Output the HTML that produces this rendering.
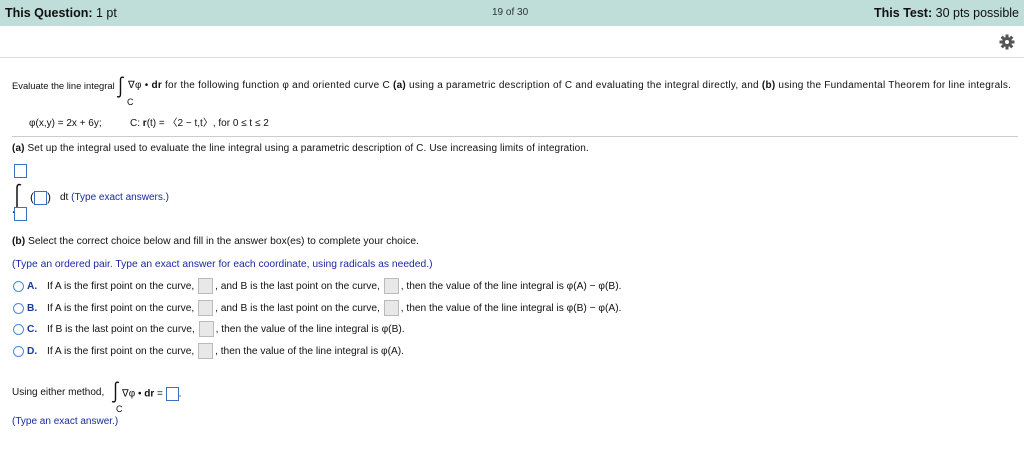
<!DOCTYPE html>
<html><head><meta charset="utf-8"><style>
*{margin:0;padding:0;box-sizing:border-box}
body{width:1024px;height:451px;background:#fff;font-family:"Liberation Sans",Arial,sans-serif;font-size:10px;color:#111;position:relative;overflow:hidden}
.a{position:absolute;white-space:nowrap;line-height:12px}
.hdr{position:absolute;left:0;top:0;width:1024px;height:26px;background:#bfddd9}
.blue{color:#1a2aa0}
.box{display:inline-block;width:13px;height:14px;border:1px solid #3b6fc4;background:#fff;vertical-align:middle}
.gbox{display:inline-block;width:15px;height:16px;border:1px solid #bbb;background:#e8e8e8;vertical-align:middle;margin:0 2px 0 1px}
.rad{position:absolute;left:0;top:3px;width:11px;height:11px;border:1px solid #4a8ad8;border-radius:50%}
.lbl{position:absolute;left:14px;top:0;color:#1a3a9a;font-weight:bold}
.ch{position:absolute;left:13px;white-space:nowrap;line-height:17px;font-size:10.2px;width:700px;height:17px}
.ch .t{position:absolute;left:34px;top:0}
svg{position:absolute}
</style></head><body>
<div class="hdr"></div>
<div class="a" style="left:5px;top:6px;font-size:12.5px;line-height:14px"><b>This Question:</b> 1 pt</div>
<div class="a" style="left:492px;top:7px;font-size:10px;color:#333">19 of 30</div>
<div class="a" style="right:5px;top:6px;font-size:12.5px;line-height:14px"><b>This Test:</b> 30 pts possible</div>
<svg style="left:999px;top:34px" width="16" height="16" viewBox="0 0 16 16"><g fill="#555"><circle cx="8" cy="8" r="5"/><rect x="6.5" y="0.5" width="3" height="15"/><rect x="0.5" y="6.5" width="15" height="3"/><rect x="6.5" y="0.5" width="3" height="15" transform="rotate(45 8 8)"/><rect x="6.5" y="0.5" width="3" height="15" transform="rotate(-45 8 8)"/></g><circle cx="8" cy="8" r="2" fill="#fff"/></svg>
<div style="position:absolute;left:0;top:57px;width:1024px;height:1px;background:#d8dbe8"></div>

<div class="a" style="left:12px;top:80px;font-size:9.4px">Evaluate the line integral</div>
<svg style="left:116px;top:76px" width="9" height="22" viewBox="0 0 9 22"><path d="M8,1.5 C5,0.5 4.5,2 4.5,4 L4.5,18 C4.5,20.5 3.5,21.5 1,20.5" fill="none" stroke="#111" stroke-width="1.4"/></svg>
<div class="a" style="left:127px;top:96px;font-size:9px">C</div>
<div class="a" style="left:128px;top:80px;letter-spacing:0.25px">∇φ • <b>dr</b> for the following function φ and oriented curve C <b>(a)</b> using a parametric description of C and evaluating the integral directly, and <b>(b)</b> using the Fundamental Theorem for line integrals.</div>
<div class="a" style="left:29px;top:118px">φ(x,y) = 2x + 6y;</div>
<div class="a" style="left:130px;top:118px">C: <b>r</b>(t) = 〈2 − t,t〉, for 0 ≤ t ≤ 2</div>
<div style="position:absolute;left:12px;top:136px;width:1006px;height:1px;background:#ccc"></div>
<div class="a" style="left:12px;top:143px;letter-spacing:0.12px"><b>(a)</b> Set up the integral used to evaluate the line integral using a parametric description of C. Use increasing limits of integration.</div>

<div class="a" style="left:14px;top:164px"><span class="box"></span></div>
<svg style="left:12px;top:183px" width="10" height="31" viewBox="0 0 10 31"><path d="M9,2 C6,0.5 5,2.5 5,5 L5,26 C5,29 4,30 1,29" fill="none" stroke="#111" stroke-width="1.5"/></svg>
<div class="a" style="left:30px;top:190px;font-size:12px;line-height:14px">(<span class="box"></span>)</div>
<div class="a" style="left:60px;top:192px">dt <span class="blue">(Type exact answers.)</span></div>
<div class="a" style="left:14px;top:207px"><span class="box"></span></div>

<div class="a" style="left:12px;top:236px;font-size:10.3px"><b>(b)</b> Select the correct choice below and fill in the answer box(es) to complete your choice.</div>
<div class="a blue" style="left:12px;top:259px;font-size:10.3px">(Type an ordered pair. Type an exact answer for each coordinate, using radicals as needed.)</div>

<div class="ch" style="top:278px"><span class="rad"></span><span class="lbl">A.</span><span class="t">If A is the first point on the curve, <span class="gbox"></span>, and B is the last point on the curve, <span class="gbox"></span>, then the value of the line integral is φ(A) − φ(B).</span></div>
<div class="ch" style="top:300px"><span class="rad"></span><span class="lbl">B.</span><span class="t">If A is the first point on the curve, <span class="gbox"></span>, and B is the last point on the curve, <span class="gbox"></span>, then the value of the line integral is φ(B) − φ(A).</span></div>
<div class="ch" style="top:321px"><span class="rad"></span><span class="lbl">C.</span><span class="t">If B is the last point on the curve, <span class="gbox"></span>, then the value of the line integral is φ(B).</span></div>
<div class="ch" style="top:343px"><span class="rad"></span><span class="lbl">D.</span><span class="t">If A is the first point on the curve, <span class="gbox"></span>, then the value of the line integral is φ(A).</span></div>

<div class="a" style="left:12px;top:387px">Using either method,</div>
<svg style="left:111px;top:381px" width="9" height="22" viewBox="0 0 9 22"><path d="M8,1.5 C5,0.5 4.5,2 4.5,4 L4.5,18 C4.5,20.5 3.5,21.5 1,20.5" fill="none" stroke="#111" stroke-width="1.4"/></svg>
<div class="a" style="left:116px;top:403px;font-size:9px">C</div>
<div class="a" style="left:122px;top:387px">∇φ • <b>dr</b> = <span class="box"></span>.</div>
<div class="a blue" style="left:12px;top:416px">(Type an exact answer.)</div>
</body></html>
